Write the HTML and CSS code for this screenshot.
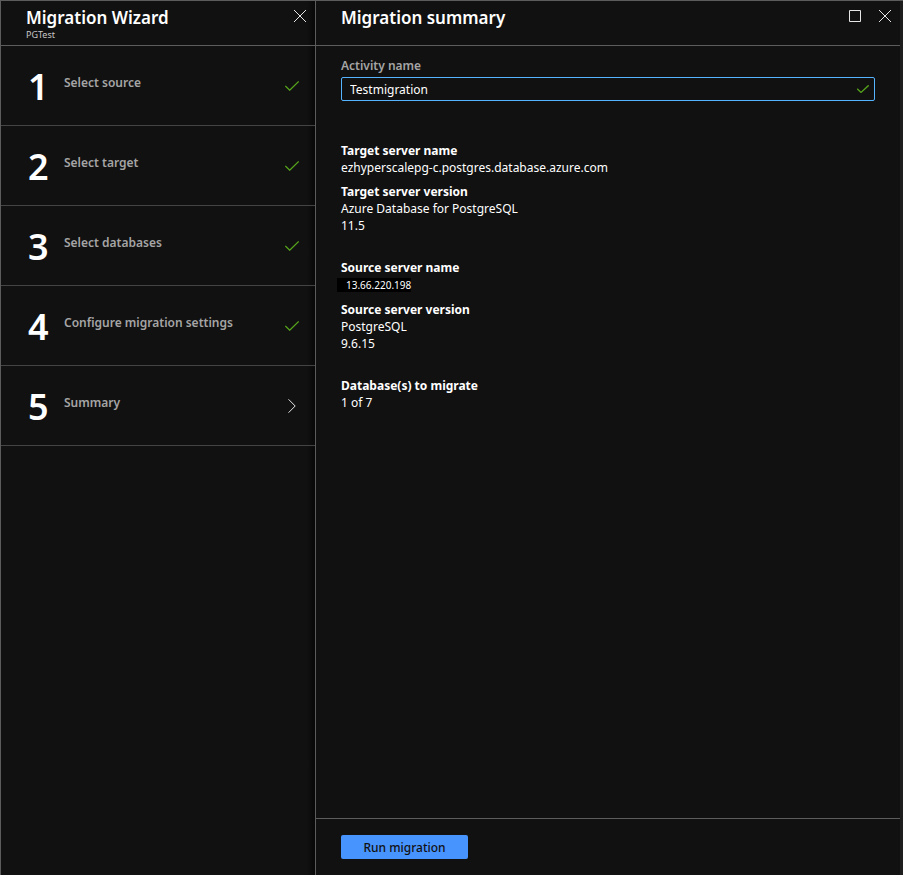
FILE: index.html
```html
<!DOCTYPE html>
<html lang="en">
<head>
  <meta charset="UTF-8">
  <meta name="viewport" content="width=device-width, initial-scale=1.0">
  <title>Migration Wizard</title>
  <link rel="stylesheet" href="styles.css">
</head>
<body>
  <div class="blades">
    <!-- Wizard steps -->
    <nav class="blade wizard" aria-label="Migration steps">
      <header class="blade-header">
        <div class="titles">
          <h1 class="blade-title">Migration Wizard</h1>
          <p class="blade-subtitle">PGTest</p>
        </div>
        <button class="icon-btn" type="button" aria-label="Close wizard">
          <svg width="12" height="12" viewBox="0 0 12 12"><path d="M0 0L12 12M12 0L0 12"/></svg>
        </button>
      </header>
      <ol class="steps">
        <li>
          <a class="step" href="#source">
            <span class="step-number">1</span>
            <span class="step-label">Select source</span>
            <svg class="check" width="14" height="10" viewBox="0 0 14 10"><path d="M0.300 5L4.700 9.200L13.700 0.500"/></svg>
          </a>
        </li>
        <li>
          <a class="step" href="#target">
            <span class="step-number">2</span>
            <span class="step-label">Select target</span>
            <svg class="check" width="14" height="10" viewBox="0 0 14 10"><path d="M0.300 5L4.700 9.200L13.700 0.500"/></svg>
          </a>
        </li>
        <li>
          <a class="step" href="#databases">
            <span class="step-number">3</span>
            <span class="step-label">Select databases</span>
            <svg class="check" width="14" height="10" viewBox="0 0 14 10"><path d="M0.300 5L4.700 9.200L13.700 0.500"/></svg>
          </a>
        </li>
        <li>
          <a class="step" href="#settings">
            <span class="step-number">4</span>
            <span class="step-label">Configure migration settings</span>
            <svg class="check" width="14" height="10" viewBox="0 0 14 10"><path d="M0.300 5L4.700 9.200L13.700 0.500"/></svg>
          </a>
        </li>
        <li>
          <a class="step" href="#summary" aria-current="step">
            <span class="step-number">5</span>
            <span class="step-label">Summary</span>
            <svg class="chevron" width="14" height="14" viewBox="0 0 14 14"><path d="M3.500 0.300L10.200 7L3.500 13.700"/></svg>
          </a>
        </li>
      </ol>
    </nav>

    <!-- Summary -->
    <main class="blade summary" id="summary">
      <header class="blade-header">
        <h2 class="blade-title">Migration summary</h2>
        <div class="window-buttons">
          <button class="icon-btn" type="button" aria-label="Maximize">
            <svg width="12" height="12" viewBox="0 0 12 12"><path d="M0.500 0.500H11.500V11.500H0.500Z"/></svg>
          </button>
          <button class="icon-btn" type="button" aria-label="Close summary">
            <svg width="12" height="12" viewBox="0 0 12 12"><path d="M0 0L12 12M12 0L0 12"/></svg>
          </button>
        </div>
      </header>

      <form class="summary-form">
        <div class="summary-body">
          <label class="field-label" for="activityName">Activity name</label>
          <div class="field">
            <input class="field-input" type="text" id="activityName" value="Testmigration">
            <svg class="check" width="12" height="8" viewBox="0 0 12 8"><path d="M0.200 3.800L4 7.400L11.700 0.300"/></svg>
          </div>

          <dl class="details">
            <div class="group">
              <div class="detail">
                <dt>Target server name</dt>
                <dd>ezhyperscalepg-c.postgres.database.azure.com</dd>
              </div>
              <div class="detail">
                <dt>Target server version</dt>
                <dd>Azure Database for PostgreSQL</dd>
                <dd>11.5</dd>
              </div>
            </div>
            <div class="group">
              <div class="detail">
                <dt>Source server name</dt>
                <dd class="address"><span>13.66.220.198</span></dd>
              </div>
              <div class="detail">
                <dt>Source server version</dt>
                <dd>PostgreSQL</dd>
                <dd>9.6.15</dd>
              </div>
            </div>
            <div class="group">
              <div class="detail">
                <dt>Database(s) to migrate</dt>
                <dd>1 of 7</dd>
              </div>
            </div>
          </dl>
        </div>

        <footer class="summary-footer">
          <button class="run-btn" type="button">Run migration</button>
        </footer>
      </form>
    </main>
  </div>
</body>
</html>
```

FILE: styles.css
```css
* {
  margin: 0;
  padding: 0;
  box-sizing: border-box;
}

body {
  font-family: "Noto Sans", "Open Sans", sans-serif;
  font-size: 12px;
  line-height: 17px;
  background-color: #1e1e1e;
  color: #fff;
}

button,
input {
  font: inherit;
}

svg {
  display: block;
  fill: none;
  stroke: #e6e6e6;
  flex-shrink: 0;
}

.blades {
  display: flex;
  min-height: 100vh;
  padding-right: 3px;
  border-top: 1px solid #5c5c5c;
}

.blade {
  display: flex;
  flex-direction: column;
  background-color: #111;
  border-left: 1px solid #5c5c5c;
}

.wizard {
  width: 315px;
  flex-shrink: 0;
  background-image: linear-gradient(to left, #080808, #111 8px);
}

.summary {
  flex: 1;
  min-width: 0;
}

.blade-header {
  display: flex;
  justify-content: space-between;
  align-items: flex-start;
  height: 45px;
  padding: 5px 9px 0 25px;
  border-bottom: 1px solid #5c5c5c;
}

.blade-title {
  font-size: 17px;
  line-height: 23px;
  font-weight: 600;
}

.blade-subtitle {
  font-size: 9px;
  line-height: 12px;
  color: #c8c8c8;
}

.window-buttons {
  display: flex;
  gap: 18px;
}

.icon-btn {
  background: none;
  border: none;
  padding: 4px 0;
  cursor: pointer;
}

.steps {
  list-style: none;
}

.step {
  display: flex;
  align-items: center;
  height: 80px;
  padding: 0 16px 0 25px;
  border-bottom: 1px solid #444;
  color: #a5a5a5;
  text-decoration: none;
}

.step-number {
  width: 38px;
  padding: 2px 0 0 2px;
  font-size: 36px;
  line-height: 40px;
  font-weight: 600;
  color: #fff;
}

.step-label {
  flex: 1;
  padding-bottom: 6px;
  font-weight: 600;
}

.check {
  stroke: #57a51c;
  stroke-width: 1.3;
}

.summary-form {
  flex: 1;
  display: flex;
  flex-direction: column;
}

.summary-body {
  flex: 1;
  padding: 11px 25px 0;
}

.field-label {
  display: block;
  margin-bottom: 3px;
  font-weight: 600;
  color: #a5a5a5;
}

.field {
  display: flex;
  align-items: center;
  height: 24px;
  padding-right: 5px;
  border: 1px solid #55b3ff;
  border-radius: 2px;
}

.field-input {
  flex: 1;
  min-width: 0;
  height: 22px;
  padding: 0 8px;
  background: transparent;
  border: none;
  outline: none;
  color: #fff;
}

.details {
  display: flex;
  flex-direction: column;
  gap: 25px;
  margin-top: 41px;
}

.group {
  display: flex;
  flex-direction: column;
  gap: 7px;
}

.detail dt {
  font-weight: 700;
}

.address span {
  margin-left: -4px;
  padding-left: 9px;
  background-color: #000;
  font-size: 10px;
}

.summary-footer {
  padding: 16px 25px;
  border-top: 1px solid #5c5c5c;
}

.run-btn {
  display: block;
  width: 127px;
  height: 24px;
  background-color: #4894fe;
  border: none;
  border-radius: 2px;
  color: #111;
  font-weight: 500;
  cursor: pointer;
}
```
